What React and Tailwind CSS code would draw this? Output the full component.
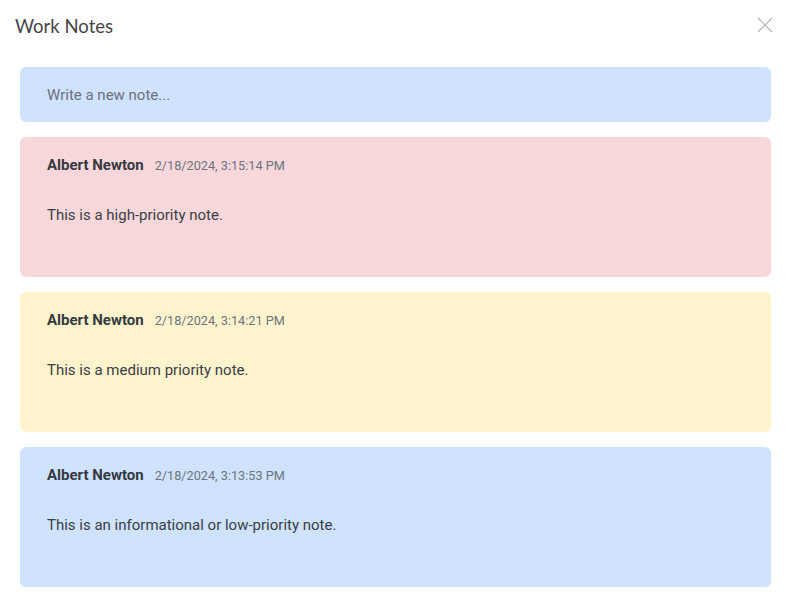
import React from 'react';

const notes = [
  { id: 1, author: 'Albert Newton', date: '2/18/2024, 3:15:14 PM', text: 'This is a high-priority note.', bg: 'bg-[#f8d7da]' },
  { id: 2, author: 'Albert Newton', date: '2/18/2024, 3:14:21 PM', text: 'This is a medium priority note.', bg: 'bg-[#fff3cd]' },
  { id: 3, author: 'Albert Newton', date: '2/18/2024, 3:13:53 PM', text: 'This is an informational or low-priority note.', bg: 'bg-[#cfe2ff]' },
];

function NoteCard({ note }) {
  return (
    <div className={`h-[140px] rounded-md px-[27px] ${note.bg}`}>
      <div className="flex items-baseline gap-[11px] pt-[18px] leading-5">
        <span className="text-[15px] font-bold text-[#343a40]">{note.author}</span>
        <span className="text-[12.7px] text-[#6c757d]">{note.date}</span>
      </div>
      <p className="mt-[29px] text-[15px] leading-5 text-[#3a3f44]">{note.text}</p>
    </div>
  );
}

export default function App() {
  return (
    <div className="w-[799px] h-[611px] bg-white font-['Roboto',sans-serif]">
      {/* Header */}
      <div className="flex items-center justify-between h-[50px] pl-[15px] pr-[26px]">
        <h1 className="pt-[3px] font-['Lato',sans-serif] text-[18.5px] text-[#454545]">Work Notes</h1>
        <button className="w-[16px] h-[16px] text-[#b5b5b5]">
          <svg viewBox="0 0 16 16" width="16" height="16" fill="none" stroke="currentColor" strokeWidth="1.2">
            <path d="M1 1L15 15M15 1L1 15" />
          </svg>
        </button>
      </div>

      <div className="flex flex-col gap-[15px] px-[20px] pt-[17px] pr-[28px]">
        <input
          type="text"
          placeholder="Write a new note..."
          className="h-[55px] w-full rounded-md bg-[#cfe2ff] px-[27px] text-[15px] text-[#333] placeholder:text-[#6b7280] outline-none"
        />
        {notes.map((note) => (
          <NoteCard key={note.id} note={note} />
        ))}
      </div>
    </div>
  );
}
